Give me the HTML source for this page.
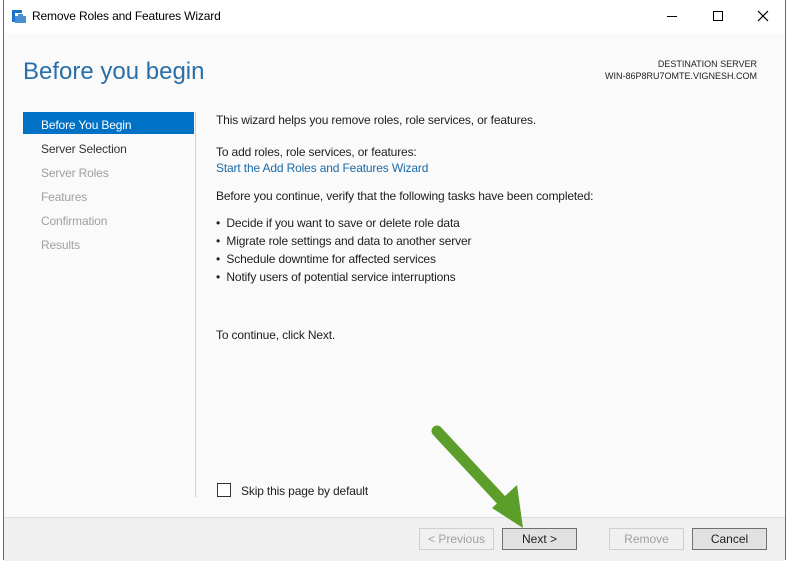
<html><head><style>
body{margin:0;width:788px;height:563px;background:#fff;position:relative;overflow:hidden;font-family:"Liberation Sans",sans-serif;font-size:12px;color:#1e1e1e}
.a{position:absolute;white-space:nowrap}
.t{letter-spacing:-0.15px}
.win{position:absolute;left:3px;top:0;width:783px;height:560px;border:1px solid #1a7ad4;border-top:none;background:#fff;box-sizing:border-box}
.btn{position:absolute;top:528px;height:22px;border:1px solid #adadad;background:#e1e1e1;box-sizing:border-box;text-align:center;line-height:21px;font-size:12px}
.nav{left:41px;font-size:12px;color:#a0a0a0}
</style></head><body>
<div class="win"></div>
<div class="a" style="left:4px;top:33px;width:781px;height:484px;background:#fafafa"></div>
<div class="a" style="left:4px;top:517px;width:781px;height:43px;background:#f0f0f0;border-top:1px solid #dfdfdf"></div>
<svg class="a" style="left:11px;top:9px" width="16" height="16"><rect x="1" y="1" width="3" height="12" fill="#1a73c6"/><rect x="1" y="1" width="10" height="3" fill="#1a73c6"/><rect x="4" y="7" width="11" height="7" fill="#4a90d0"/><rect x="7" y="5" width="5" height="2" fill="#4a90d0"/></svg>
<div class="a t" style="left:32px;top:9px;font-size:12px;color:#000">Remove Roles and Features Wizard</div>
<div class="a" style="left:667px;top:16px;width:10px;height:1px;background:#000"></div>
<div class="a" style="left:713px;top:11px;width:8px;height:8px;border:1px solid #000"></div>
<svg class="a" style="left:757px;top:10px" width="12" height="12"><path d="M1 1L11 11M11 1L1 11" stroke="#000" stroke-width="1.2"/></svg>
<div class="a" style="left:23px;top:58px;font-size:24px;color:#2a6fa8;font-weight:300">Before you begin</div>
<div class="a" style="left:560px;top:58px;width:197px;text-align:right;font-size:9px;line-height:12px;color:#1e1e1e">DESTINATION SERVER<br>WIN-86P8RU7OMTE.VIGNESH.COM</div>
<div class="a" style="left:23px;top:112px;width:171px;height:22px;background:#0072c6"></div>
<div class="a t" style="left:41px;top:118px;color:#fff">Before You Begin</div>
<div class="a nav t" style="top:142px;color:#333">Server Selection</div>
<div class="a nav t" style="top:166px">Server Roles</div>
<div class="a nav t" style="top:190px">Features</div>
<div class="a nav t" style="top:214px">Confirmation</div>
<div class="a nav t" style="top:238px">Results</div>
<div class="a" style="left:195px;top:112px;width:1px;height:385px;background:#d0d0d0"></div>
<div class="a t" style="left:216px;top:113px">This wizard helps you remove roles, role services, or features.</div>
<div class="a t" style="left:216px;top:145px">To add roles, role services, or features:</div>
<div class="a t" style="left:216px;top:161px;color:#1a6aa8">Start the Add Roles and Features Wizard</div>
<div class="a t" style="left:216px;top:189px">Before you continue, verify that the following tasks have been completed:</div>
<div class="a t" style="left:216px;top:214px;line-height:18px">•&nbsp; Decide if you want to save or delete role data<br>•&nbsp; Migrate role settings and data to another server<br>•&nbsp; Schedule downtime for affected services<br>•&nbsp; Notify users of potential service interruptions</div>
<div class="a t" style="left:216px;top:328px">To continue, click Next.</div>
<div class="a" style="left:217px;top:483px;width:12px;height:12px;border:1px solid #333;background:#fff"></div>
<div class="a t" style="left:241px;top:484px">Skip this page by default</div>
<div class="btn" style="left:419px;width:75px;color:#a0a0a0;background:#f0f0f0;border-color:#cfcfcf">&lt; Previous</div>
<div class="btn" style="left:502px;width:75px;border-color:#707070">Next &gt;</div>
<div class="btn" style="left:609px;width:75px;color:#a0a0a0;background:#f0f0f0;border-color:#cfcfcf">Remove</div>
<div class="btn" style="left:692px;width:75px;border-color:#707070">Cancel</div>
<svg class="a" style="left:0;top:0" width="788" height="563"><line x1="437" y1="431" x2="503" y2="502" stroke="#5b9e2a" stroke-width="11" stroke-linecap="round"/><polygon points="492,508 517,485 523,528" fill="#5b9e2a"/></svg>
</body></html>
